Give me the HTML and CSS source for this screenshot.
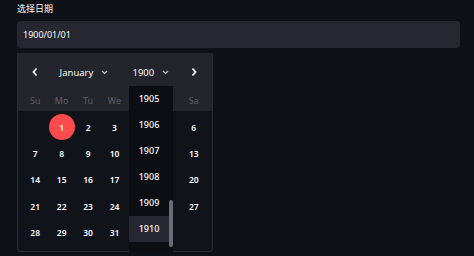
FILE: index.html
```html
<!DOCTYPE html>
<html>
<head>
<meta charset="utf-8">
<link rel="stylesheet" href="styles.css">
</head>
<body>
<div class="app">
  <div class="label">选择日期</div>
  <div class="input">1900/01/01</div>
</div>
<div class="popover">
  <div class="head">
    <div class="nav">
      <span class="arrow"><svg width="8" height="10" viewBox="0 0 8 10"><path d="M5.5 1.5 L2.5 5 L5.5 8.5" fill="none" stroke="#fafafa" stroke-width="1.8"/></svg></span>
      <span class="sel month">January <svg width="7" height="5" viewBox="0 0 7 5"><path d="M1 1 L3.5 3.5 L6 1" fill="none" stroke="#c8c9cf" stroke-width="1.2"/></svg></span>
      <span class="sel year">1900 <svg width="7" height="5" viewBox="0 0 7 5"><path d="M1 1 L3.5 3.5 L6 1" fill="none" stroke="#c8c9cf" stroke-width="1.2"/></svg></span>
      <span class="arrow"><svg width="8" height="10" viewBox="0 0 8 10"><path d="M2.5 1.5 L5.5 5 L2.5 8.5" fill="none" stroke="#fafafa" stroke-width="1.8"/></svg></span>
    </div>
    <div class="week">
      <span>Su</span><span>Mo</span><span>Tu</span><span>We</span><span class="under">Th</span><span class="under">Fr</span><span>Sa</span>
    </div>
  </div>
  <div class="days">
    <span></span><span class="on"><i>1</i></span><span>2</span><span>3</span><span class="under">4</span><span class="under">5</span><span>6</span>
    <span>7</span><span>8</span><span>9</span><span>10</span><span class="under">11</span><span class="under">12</span><span>13</span>
    <span>14</span><span>15</span><span>16</span><span>17</span><span class="under">18</span><span class="under">19</span><span>20</span>
    <span>21</span><span>22</span><span>23</span><span>24</span><span class="under">25</span><span class="under">26</span><span>27</span>
    <span>28</span><span>29</span><span>30</span><span>31</span><span></span><span></span><span></span>
  </div>
  <div class="years">
    <div class="list">
      <div>1905</div><div>1906</div><div>1907</div><div>1908</div><div>1909</div><div class="hl">1910</div>
    </div>
    <div class="scroll"><div class="thumb"></div></div>
  </div>
</div>
</body>
</html>
```
FILE: styles.css
```css
html, body { margin: 0; padding: 0; }
body {
  background: #0e1117;
  width: 474px;
  height: 256px;
  overflow: hidden;
  font-family: "Noto Sans", "Noto Sans CJK SC", sans-serif;
  color: #fafafa;
}
.app { padding: 0 14px 0 17px; }
.label {
  font-family: "Noto Sans CJK SC", sans-serif;
  font-size: 9px;
  line-height: 12px;
  height: 21px;
  padding-top: 3px;
  box-sizing: border-box;
}
.input {
  height: 27px;
  background: #262730;
  border-radius: 4px;
  font-size: 9px;
  line-height: 27px;
  padding-left: 6px;
}
.popover {
  position: absolute;
  left: 17px;
  top: 53px;
  width: 196px;
  height: 199px;
  box-sizing: border-box;
  border: 1px solid #2a2b33;
  border-top: none;
  border-radius: 0 0 4px 4px;
  background: #10131a;
}
.head { background: #23242c; padding: 0 5px 0 4px; }
.nav {
  height: 38px;
  display: grid;
  grid-template-columns: 26.6px 1fr 1fr 26.6px;
  align-items: center;
  font-size: 9.5px;
}
.arrow { display: flex; justify-content: center; }
.sel { display: flex; align-items: center; gap: 8px; }
.month { padding-left: 11px; }
.year { padding-left: 18px; }
.week, .days {
  display: grid;
  grid-template-columns: repeat(7, 1fr);
  text-align: center;
}
.week { height: 20px; line-height: 20px; font-size: 9px; color: #5d5f68; }
.under { visibility: hidden; }
.days {
  padding: 3px 5px 0 4px;
  grid-auto-rows: 26.3px;
  font-size: 8.5px;
  font-weight: 600;
}
.days span { display: flex; align-items: center; justify-content: center; }
.days .on i {
  font-style: normal;
  flex: 0 0 26px;
  width: 26px; height: 26px;
  border-radius: 50%;
  background: #ff4b4b;
  display: flex; align-items: center; justify-content: center;
}
.years {
  position: absolute;
  left: 111px;
  top: 33px;
  width: 44px;
  height: 166px;
  background: #0c0e13;
  display: flex;
}
.list { width: 40px; }
.list div {
  height: 26px;
  line-height: 26px;
  text-align: center;
  font-size: 9px;
  font-weight: 500;
}
.list .hl { background: #262730; }
.scroll { width: 4px; position: relative; }
.thumb {
  position: absolute;
  top: 114px;
  left: 0;
  width: 4px;
  height: 47px;
  border-radius: 2px;
  background: #6a6c75;
}
```
